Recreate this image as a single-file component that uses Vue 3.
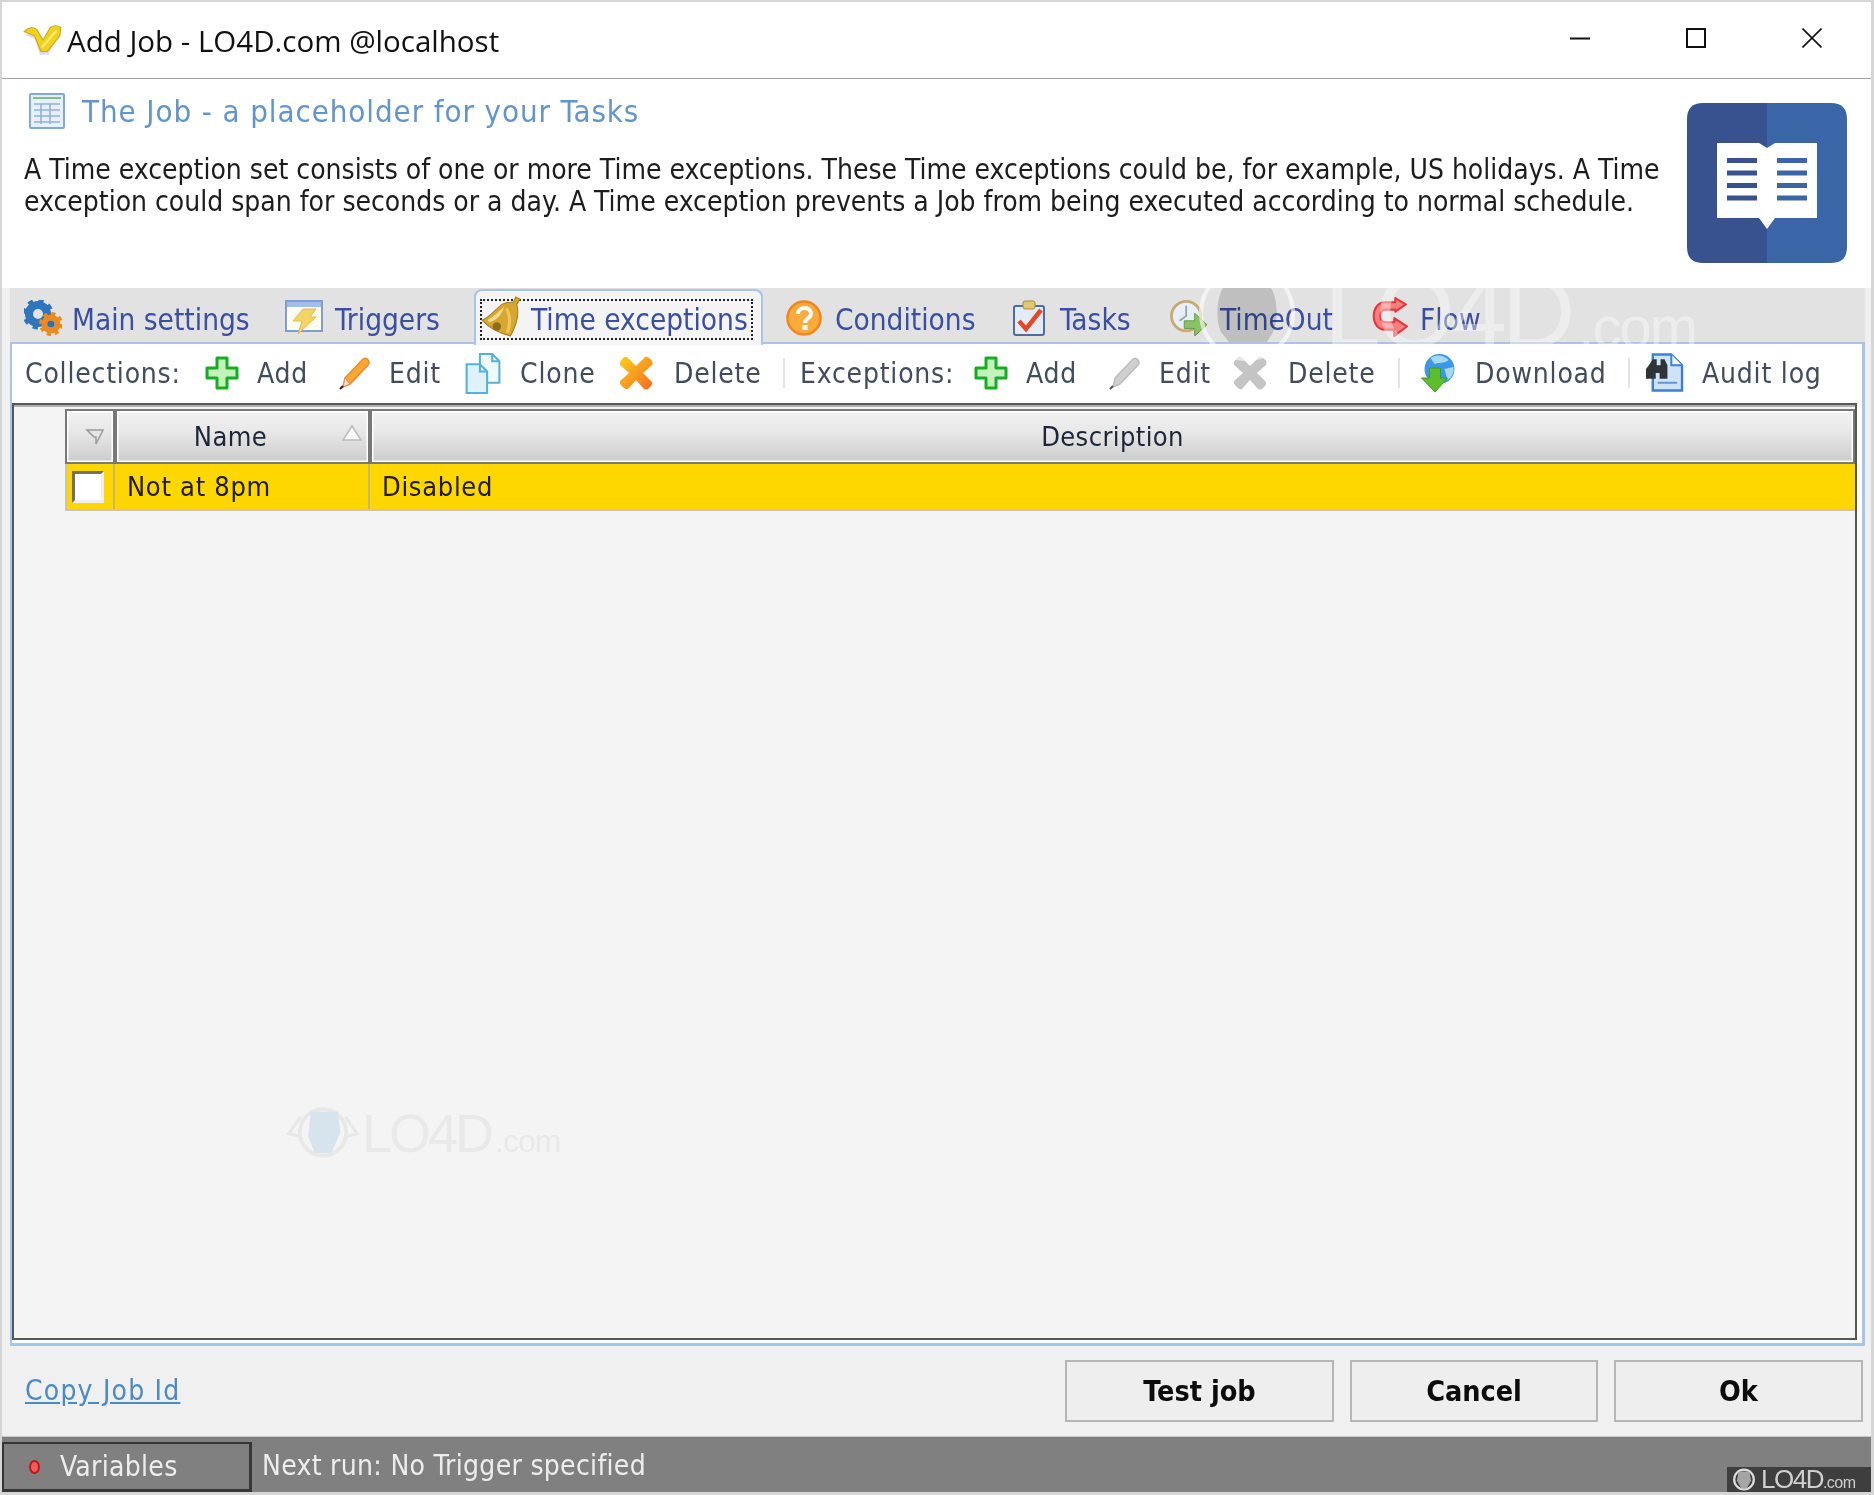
<template>
  <div class="window">
    <div class="titlebar">
      <svg class="app-icon" viewBox="0 0 40 32">
        <path d="M2 9 L13 5 L19 15 L27 3 L37 4 L24 28 L16 28 L11 13 Z" fill="#bbb" opacity=".5" transform="translate(1 2)" />
        <path d="M2 8 C6 4 11 3 14 6 L20 16 L27 4 Q32 1 37 4 L36 12 L24 27 L18 27 L12 12 Q7 10 2 8 Z" fill="#f2d21e" stroke="#c9a80f" stroke-width="1" />
        <path d="M19 23 L33 7" stroke="#fff27a" stroke-width="2" />
      </svg>
      <span class="title-text">Add Job - LO4D.com @localhost</span>
      <div class="win-buttons">
        <svg viewBox="0 0 20 20" width="20" height="20"><path d="M0 10.500 H20" stroke="#111" stroke-width="2" /></svg>
        <svg viewBox="0 0 20 20" width="20" height="20"><rect x="1" y="1" width="18" height="18" fill="none" stroke="#111" stroke-width="2" /></svg>
        <svg viewBox="0 0 20 20" width="20" height="20"><path d="M.5 .5 L19.500 19.500 M19.500 .5 L.5 19.500" stroke="#111" stroke-width="1.600" /></svg>
      </div>
    </div>

    <div class="header">
      <div class="header-text">
        <div class="header-title">
          <svg class="table-icon" viewBox="0 0 36 36">
            <rect x="1" y="1" width="34" height="34" rx="1" fill="#e8f1fb" stroke="#7fa8dc" stroke-width="2" />
            <rect x="4" y="4" width="28" height="2" fill="#7cc47c" />
            <path d="M5 11 H31 M5 17 H31 M5 23 H31 M5 29 H31 M12 11 V31 M21 11 V31" stroke="#8fb2df" stroke-width="1.600" />
          </svg>
          <span>The Job - a placeholder for your Tasks</span>
        </div>
        <p class="header-desc">A Time exception set consists of one or more Time exceptions. These Time exceptions could be, for example, US holidays. A Time<br />exception could span for seconds or a day. A Time exception prevents a Job from being executed according to normal schedule.</p>
      </div>
      <svg class="book" viewBox="0 0 160 160">
        <path d="M80 0 H16 Q0 0 0 16 V144 Q0 160 16 160 H80 Z" fill="#38528f" />
        <path d="M80 0 H144 Q160 0 160 16 V144 Q160 160 144 160 H80 Z" fill="#3a66a8" />
        <path d="M30 40 H72 L80 45 L88 40 H130 V115 H88 L80 126 L72 115 H30 Z" fill="#fff" />
        <path d="M40 57.500 H70 M40 70 H70 M40 82.500 H70 M40 95 H70" stroke="#38528f" stroke-width="5" />
        <path d="M90 57.500 H120 M90 70 H120 M90 82.500 H120 M90 95 H120" stroke="#3a66a8" stroke-width="5" />
      </svg>
    </div>

    <div class="tabs">
      <div class="tab tab-main">
        <svg class="tab-icon" viewBox="0 0 38 36">
          <circle cx="14" cy="14" r="9" fill="none" stroke="#2f75bb" stroke-width="8" />
          <circle cx="14" cy="14" r="13" fill="none" stroke="#2f75bb" stroke-width="5" stroke-dasharray="5 5.200" />
          <circle cx="27" cy="24" r="6.500" fill="none" stroke="#ee8a1c" stroke-width="6" />
          <circle cx="27" cy="24" r="10" fill="none" stroke="#ee8a1c" stroke-width="4" stroke-dasharray="4 3.850" />
          <circle cx="27" cy="24" r="3.500" fill="#2f6fb3" />
        </svg>
        <span>Main settings</span>
      </div>
      <div class="tab">
        <svg class="tab-icon" viewBox="0 0 38 36">
          <rect x="1" y="1" width="36" height="30" fill="#fffdf2" stroke="#7b9fd0" stroke-width="2" />
          <rect x="2" y="2" width="34" height="5" fill="#9fc0ea" />
          <path d="M18 9 H31 L25 17 H31 L13 34 L17 21 H8 Z" fill="#f1d366" stroke="#e5bd4a" />
        </svg>
        <span>Triggers</span>
      </div>
      <div class="tab active">
        <div class="focus-rect">
          <svg class="tab-icon bell" viewBox="0 0 38 40">
            <path d="M33 1 L37 3 L34 8 C37 18 33 29 28 38 C20 36 8 31 1 23 C9 20 14 12 20 8 C25 5 29 6 31 6 Z" fill="#d6a630" stroke="#a87e1a" />
            <path d="M6 23 C12 20 18 14 22 10 C20 18 14 24 8 25 Z" fill="#f3d98a" />
            <circle cx="15" cy="29" r="4" fill="#8f6c1c" />
            <path d="M24 12 C28 18 28 28 25 35" stroke="#ecc65d" stroke-width="3" fill="none" />
          </svg>
          <span>Time exceptions</span>
        </div>
      </div>
      <div class="tab tab-cond">
        <svg class="tab-icon" viewBox="0 0 36 36">
          <circle cx="18" cy="18" r="16.500" fill="#fbab3c" stroke="#f0861c" stroke-width="2.500" />
          <path d="M12 14 C12 6 25 6 25 13.500 C25 18 19 18.500 19 23" fill="none" stroke="#fff" stroke-width="4" />
          <rect x="16.500" y="25" width="5" height="5" fill="#fff" />
        </svg>
        <span>Conditions</span>
      </div>
      <div class="tab tab-tasks">
        <svg class="tab-icon" viewBox="0 0 34 36">
          <rect x="2" y="6" width="30" height="29" rx="2" fill="#e3ebf7" stroke="#4d6d9f" stroke-width="2" />
          <rect x="11" y="1" width="12" height="8" rx="2" fill="#e1c76e" stroke="#a78e3d" />
          <path d="M7 21 L14 29 L29 10" fill="none" stroke="#e2492b" stroke-width="4.500" />
        </svg>
        <span>Tasks</span>
      </div>
      <div class="tab">
        <svg class="tab-icon" viewBox="0 0 40 38">
          <circle cx="17" cy="17" r="15.500" fill="#e7eff8" stroke="#c7ab72" stroke-width="3" />
          <path d="M17 6 V17 L10 22" fill="none" stroke="#9aa6b2" stroke-width="2" />
          <path d="M15 22 H26 V14 L39 26 L26 38 V30 H15 Z" fill="#8bc267" stroke="#5c9a3f" />
        </svg>
        <span>TimeOut</span>
      </div>
      <div class="tab tab-flow">
        <svg class="tab-icon flow-icon" viewBox="0 0 36 38">
          <path d="M34 7 L24 1 V5 H14 C0 5 0 31 14 31 H23 V37 L35 28 L23 20 V24 H15 C8 24 8 12 15 12 H24 V14 Z" fill="#fb7f7f" stroke="#e5383c" stroke-width="2" stroke-linejoin="round" />
        </svg>
        <span>Flow</span>
      </div>
    </div>

    <div class="page">
      <div class="toolbar">
        <div class="tool"><span>Collections:</span></div>
        <div class="tool">
          <svg class="tool-icon" viewBox="0 0 34 34"><path d="M12 2 H22 V12 H32 V22 H22 V32 H12 V22 H2 V12 H12 Z" fill="#c4f2ba" stroke="#14ad24" stroke-width="3" stroke-linejoin="round" /></svg>
          <span>Add</span>
        </div>
        <div class="tool">
          <svg class="tool-icon" viewBox="0 0 34 34">
            <path d="M8 22 L26 3 Q29 1 31 4 Q33 7 31 9 L13 28 L6 31 Z" fill="#f8a832" stroke="#f0882a" stroke-width="1.500" />
            <path d="M8 22 L13 28 L6 31 Z" fill="#fbe3c8" stroke="#e98463" />
            <path d="M3 33 L6 30" stroke="#222" stroke-width="2" />
          </svg>
          <span>Edit</span>
        </div>
        <div class="tool">
          <svg class="tool-icon tall" viewBox="0 0 36 42">
            <path d="M15 2 H27 L34 9 V30 H15 Z" fill="#eef8fd" stroke="#53b3d6" stroke-width="2" />
            <path d="M27 2 V9 H34" fill="none" stroke="#53b3d6" stroke-width="2" />
            <path d="M2 12 H15 L22 19 V40 H2 Z" fill="#dff2fb" stroke="#53b3d6" stroke-width="2" />
            <path d="M15 12 V19 H22" fill="none" stroke="#53b3d6" stroke-width="2" />
          </svg>
          <span>Clone</span>
        </div>
        <div class="tool wide">
          <svg class="tool-icon" viewBox="0 0 34 34">
            <defs>
              <linearGradient id="xfill" x1="0" y1="0" x2="1" y2="1"><stop offset="0" stop-color="#fcd11c" /><stop offset="1" stop-color="#f8691f" /></linearGradient>
            </defs>
            <path d="M8 1 L17 10 L26 1 Q29 0 33 5 Q34 8 33 9 L24 17 L33 26 Q34 29 29 33 Q27 34 25 33 L17 24 L9 33 Q6 34 2 29 Q0 27 1 25 L10 17 L1 9 Q0 6 4 2 Q6 0 8 1 Z" fill="url(#xfill)" />
          </svg>
          <span>Delete</span>
        </div>
        <div class="sep"></div>
        <div class="tool"><span>Exceptions:</span></div>
        <div class="tool">
          <svg class="tool-icon" viewBox="0 0 34 34"><path d="M12 2 H22 V12 H32 V22 H22 V32 H12 V22 H2 V12 H12 Z" fill="#c4f2ba" stroke="#14ad24" stroke-width="3" stroke-linejoin="round" /></svg>
          <span>Add</span>
        </div>
        <div class="tool">
          <svg class="tool-icon" viewBox="0 0 34 34">
            <path d="M8 22 L26 3 Q29 1 31 4 Q33 7 31 9 L13 28 L6 31 Z" fill="#cfcfcf" stroke="#bdbdbd" stroke-width="1.500" />
            <path d="M3 33 L6 30" stroke="#555" stroke-width="2" />
          </svg>
          <span>Edit</span>
        </div>
        <div class="tool wide">
          <svg class="tool-icon" viewBox="0 0 34 34">
            <path d="M8 1 L17 10 L26 1 Q29 0 33 5 Q34 8 33 9 L24 17 L33 26 Q34 29 29 33 Q27 34 25 33 L17 24 L9 33 Q6 34 2 29 Q0 27 1 25 L10 17 L1 9 Q0 6 4 2 Q6 0 8 1 Z" fill="#c4c4c4" />
          </svg>
          <span>Delete</span>
        </div>
        <div class="sep"></div>
        <div class="tool">
          <svg class="tool-icon big" viewBox="0 0 38 40">
            <circle cx="21" cy="16" r="15" fill="#3b97e8" />
            <path d="M12 5 C18 1 26 2 30 7 C26 11 20 9 16 11 Z M26 16 L35 14 C36 20 33 25 29 27 Z" fill="#a8d7f5" />
            <path d="M11 15 H22 V25 H29 L16.500 39 L3 25 H11 Z" fill="#5cbd2e" stroke="#3f9a1f" />
          </svg>
          <span>Download</span>
        </div>
        <div class="sep"></div>
        <div class="tool">
          <svg class="tool-icon big" viewBox="0 0 40 40">
            <path d="M8 1 H27 L38 12 V38 H8 Z" fill="#cfe3f7" stroke="#3f7fd0" stroke-width="2.500" />
            <path d="M27 1 V12 H38" fill="#eef5fc" stroke="#3f7fd0" stroke-width="2" />
            <rect x="13" y="29" width="20" height="2" fill="#5c94d8" />
            <path d="M4 12 L8 6 H12 V12 H16 V6 H20 L23 12 V26 H15 V20 H11 V26 H1 V16 Z" fill="#2e3438" />
          </svg>
          <span>Audit log</span>
        </div>
      </div>

      <div class="grid-frame">
        <div class="grid">
          <div class="head-row">
            <div class="head-cell filter">
              <svg viewBox="0 0 20 20" width="20" height="20"><path d="M2 3 H18 L11 17 V10 H9 Z" fill="#e6e6e6" stroke="#9a9a9a" stroke-width="1.500" /></svg>
            </div>
            <div class="head-cell name">
              <span>Name</span>
              <svg class="sort" viewBox="0 0 20 18" width="20" height="18"><path d="M10 2 L19 16 H1 Z" fill="#fafafa" stroke="#bcbcbc" stroke-width="1.500" /></svg>
            </div>
            <div class="head-cell desc">Description</div>
          </div>
          <div class="data-row">
            <div class="data-cell check"><span class="checkbox"></span></div>
            <div class="data-cell name-cell">Not at 8pm</div>
            <div class="data-cell">Disabled</div>
          </div>
        </div>
      </div>
    </div>

    <div class="footer">
      <a class="copy-link">Copy Job Id</a>
      <div class="buttons">
        <button class="btn test">Test job</button>
        <button class="btn cancel">Cancel</button>
        <button class="btn ok">Ok</button>
      </div>
    </div>

    <div class="statusbar">
      <div class="variables"><i class="dot"></i><span>Variables</span></div>
      <span class="next-run">Next run: No Trigger specified</span>
    </div>

    <!-- watermarks -->
    <svg class="mark-ring" viewBox="0 0 124 100" width="124" height="100">
      <circle cx="62" cy="50" r="46" fill="none" stroke="#fff" stroke-opacity=".6" stroke-width="4" />
    </svg>
    <svg class="mark-blob" viewBox="0 0 64 54" width="64" height="54">
      <path d="M8 0 H56 C62 10 64 30 58 44 L52 54 H14 L6 44 C0 30 2 10 8 0 Z" fill="#d8d8d8" />
    </svg>
    <div class="mark mark-top">
      <span>LO4D<small>.com</small></span>
    </div>
    <div class="mark mark-mid">
      <svg viewBox="0 0 110 90" width="74" height="58"><circle cx="55" cy="44" r="36" fill="none" stroke="#e8e8e8" stroke-width="6" /><path d="M36 12 H78 L82 44 L68 76 L42 76 L32 50 Z" fill="#d7e4ee" /><path d="M20 20 L2 46 L18 50 M90 20 L108 46 L92 50" fill="none" stroke="#e8e8e8" stroke-width="5" /></svg>
      <span>LO4D<small>.com</small></span>
    </div>
    <div class="mark-corner">
      <svg viewBox="0 0 36 28" width="34" height="25"><circle cx="18" cy="14" r="11" fill="none" stroke="#ddd" stroke-width="2.500" /><path d="M12 5 H24 L26 15 L21 24 H15 L10 15 Z" fill="#a5a5a5" /></svg>
      <span>LO4D<small>.com</small></span>
    </div>
  </div>
</template>

<script setup>
</script>

<style>
html, body { margin: 0; background: #fff; }
</style>

<style scoped>
.window {
  position: relative;
  box-sizing: border-box;
  width: 1874px;
  height: 1495px;
  overflow: hidden;
  display: flex;
  flex-direction: column;
  background: #f0f0f0;
  border-top: 2px solid #d6d6d6;
  border-left: 2px solid #d6d6d6;
  border-right: 3px solid #d6d6d6;
  border-bottom: 3px solid #d6d6d6;
  font-family: "DejaVu Sans Condensed", "DejaVu Sans", sans-serif;
  font-stretch: condensed;
  filter: blur(0.45px);
}

.titlebar {
  height: 76px;
  flex: none;
  display: flex;
  align-items: center;
  background: #fff;
  border-bottom: 1px solid #a0a0a0;
}
.app-icon { width: 42px; height: 34px; margin-left: 20px; }
.title-text {
  margin-left: 3px;
  font-family: "Open Sans", "Noto Sans", sans-serif;
  font-stretch: normal;
  font-size: 29.500px;
  color: #111;
}
.win-buttons {
  margin-left: auto;
  margin-right: 49px;
  display: flex;
  gap: 96px;
  margin-top: -5px;
}

.header {
  height: 209px;
  flex: none;
  display: flex;
  background: #fff;
}
.header-text { flex: 1; padding-left: 22px; }
.header-title {
  display: flex;
  align-items: center;
  margin-top: 13px;
  font-size: 31px;
  letter-spacing: .9px;
  color: #6395ca;
  height: 38px;
}
.table-icon { width: 36px; height: 36px; margin: 0 17px 0 5px; }
.header-desc {
  margin: 24px 0 0;
  font-size: 28px;
  line-height: 32px;
  color: #1c1c1c;
  white-space: nowrap;
}
.book { width: 160px; height: 160px; margin: 24px 24px 0 0; }

.tabs {
  height: 54px;
  flex: none;
  margin: 0 6px 0 8px;
  padding-left: 14px;
  box-sizing: border-box;
  display: grid;
  grid-template-columns: 261px 189px 289px 250px 157px 205px 1fr;
  background: #e2e2e2;
  font-size: 29.500px;
  color: #3a4f9f;
}
.tab {
  box-sizing: border-box;
  display: flex;
  align-items: center;
  gap: 12px;
  height: 54px;
  padding-top: 10px;
  white-space: nowrap;
}
.tab-icon { width: 38px; height: 36px; flex: none; margin-top: -5px; }
.tab-main { gap: 10px; }
.tab-cond { padding-left: 22px; }
.tab-tasks { margin-left: -3px; }
.tab-flow { margin-left: -5px; }
.flow-icon { height: 40px; margin-top: -7px; }
.tab.active {
  height: 56px;
  margin-top: 1px;
  padding: 8px 8px 0 4px;
  align-items: flex-start;
  background: #f4f4f4;
  border: 2px solid #a6c4ec;
  border-bottom: 0;
  border-radius: 8px 8px 0 0;
  position: relative;
  z-index: 1;
}
.focus-rect {
  flex: 1;
  box-sizing: border-box;
  height: 41px;
  display: flex;
  align-items: center;
  gap: 9px;
  border: 2px dotted #222;
}
.bell { width: 42px; height: 42px; margin: -5px 0 0 -2px; }

.page {
  flex: 1;
  min-height: 0;
  margin: 0 6px 0 8px;
  display: flex;
  flex-direction: column;
  background: #fff;
  border: 2px solid #a6c4ec;
  border-width: 2px 3px 3px 2px;
}
.toolbar {
  height: 59px;
  flex: none;
  box-sizing: border-box;
  padding: 0 0 1px 13px;
  display: grid;
  grid-template-columns: 180px 132px 127px 155px 164px 17px 174px 133px 126px 165px 20px 210px 17px 1fr;
  align-items: center;
  font-size: 28px;
  letter-spacing: .8px;
  color: #424c5c;
}
.tool {
  display: flex;
  align-items: center;
  gap: 18px;
  white-space: nowrap;
}
.tool.wide { gap: 21px; }
.tool-icon { width: 34px; height: 34px; flex: none; }
.tool-icon.tall { width: 38px; height: 43px; }
.tool-icon.big { width: 39px; height: 40px; }
.sep { width: 2px; height: 30px; background: #e4e4e4; }

.grid-frame {
  flex: 1;
  min-height: 0;
  margin: 0 5px 3px 0;
  border: 2px solid #565656;
  background: #f4f4f4;
  box-shadow: inset 0 2px #b0b0b0;
  padding-top: 4px;
}
.grid { margin-left: 51px; font-size: 27px; letter-spacing: .4px; color: #1d2538; }
.head-row { display: flex; height: 55px; }
.head-cell {
  box-sizing: border-box;
  height: 55px;
  display: flex;
  align-items: center;
  justify-content: center;
  background: linear-gradient(#f2f2f2, #e8e8e8 40%, #cccccc);
  border: 2px solid #787878;
  box-shadow: inset 0 0 0 1.500px #fff;
}
.head-cell.filter { width: 50px; padding-left: 9px; }
.head-cell.name { width: 255px; position: relative; padding-right: 24px; }
.head-cell.desc { flex: 1; }
.sort { position: absolute; right: 6px; top: 13px; }
.data-row {
  display: flex;
  height: 47px;
  box-sizing: border-box;
  background: #ffd700;
  border-bottom: 2px solid #c4c4c4;
  border-left: 2px solid #c4c4c4;
  color: #1c1a00;
  letter-spacing: .7px;
}
.data-cell {
  display: flex;
  align-items: center;
  padding-left: 12px;
  border-right: 2px solid #c8b768;
}
.data-cell:last-child { border-right: 0; }
.check { box-sizing: border-box; width: 48px; padding-left: 5px; }
.name-cell { box-sizing: border-box; width: 255px; }
.checkbox {
  display: block;
  box-sizing: border-box;
  width: 32px;
  height: 32px;
  background: #fff;
  border: 3px solid;
  border-color: #6f6f6f #efefef #efefef #6f6f6f;
}

.footer {
  height: 90px;
  flex: none;
  box-sizing: border-box;
  display: flex;
  align-items: flex-start;
  justify-content: space-between;
  padding: 14px 8px 0 23px;
}
.copy-link {
  margin-top: 14px;
  font-size: 28px;
  letter-spacing: 1.200px;
  color: #4b8ac5;
  text-decoration: underline;
}
.buttons { display: flex; gap: 16px; }
.btn {
  box-sizing: border-box;
  height: 62px;
  padding: 0;
  background: #eeeeee;
  border: 2px solid #b6b6b6;
  font-family: inherit;
  font-stretch: inherit;
  font-weight: bold;
  font-size: 28.500px;
  color: #0c0c0c;
}
.btn.test { width: 269px; }
.btn.cancel { width: 248px; }
.btn.ok { width: 249px; }

.statusbar {
  height: 56px;
  flex: none;
  box-sizing: border-box;
  display: flex;
  align-items: center;
  background: #808080;
  border-top: 1px solid #c8c8c8;
  color: #ededed;
  font-size: 28px;
  letter-spacing: .3px;
}
.variables {
  box-sizing: border-box;
  width: 250px;
  height: 50px;
  margin-top: 5px;
  display: flex;
  align-items: center;
  gap: 20px;
  padding-left: 25px;
  border: 2px solid #363636;
  border-width: 2px 3px 3px 2px;
}
.dot {
  width: 11px;
  height: 14px;
  border-radius: 50%;
  background: #f05c5c;
  border: 2px solid #c01818;
  box-sizing: border-box;
}
.next-run { margin-left: 10px; margin-top: 1px; }

.mark {
  position: absolute;
  display: flex;
  align-items: center;
  pointer-events: none;
  font-family: "Liberation Sans", sans-serif;
  font-stretch: normal;
}
.mark-ring { position: absolute; left: 1183px; top: 261px; pointer-events: none; }
.mark-blob {
  position: absolute;
  left: 1213px;
  top: 286px;
  pointer-events: none;
  mix-blend-mode: multiply;
}
.mark-top {
  left: 1322px;
  top: 252px;
  font-size: 102px;
  color: rgba(255, 255, 255, 0.4);
  letter-spacing: -5px;
}
.mark-top small { font-size: 58px; letter-spacing: -2px; margin-left: 8px; }
.mark-mid {
  left: 284px;
  top: 1100px;
  gap: 2px;
  font-size: 54px;
  color: #e9e9e9;
  letter-spacing: -3px;
}
.mark-mid small { font-size: 32px; letter-spacing: -1px; margin-left: 4px; }
.mark-corner {
  position: absolute;
  right: -3px;
  bottom: 0;
  width: 147px;
  height: 25px;
  display: flex;
  align-items: center;
  background: #3e3e3e;
  font-family: "Liberation Sans", sans-serif;
  font-stretch: normal;
  font-size: 26px;
  color: #cfcfcf;
  letter-spacing: -1.500px;
}
.mark-corner small { font-size: 16px; letter-spacing: -.5px; }
</style>
